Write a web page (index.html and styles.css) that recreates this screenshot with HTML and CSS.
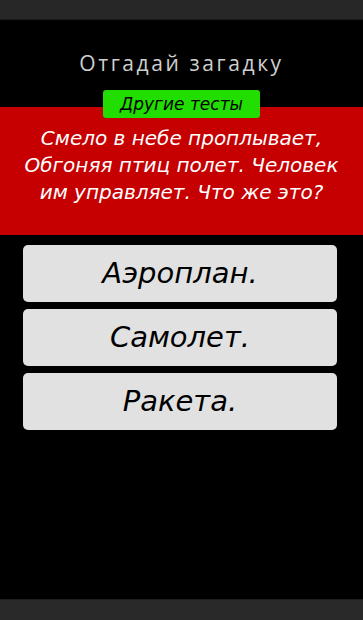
FILE: index.html
```html
<!DOCTYPE html>
<html>
<head>
<meta charset="utf-8">
<link rel="stylesheet" href="styles.css">
</head>
<body>
<div class="screen">
  <div class="statusbar"></div>
  <main class="content">
    <h1 class="title">Отгадай загадку</h1>
    <section class="riddle">
      <div class="other-tests">Другие тесты</div>
      <p class="question">Смело в небе проплывает,<br>Обгоняя птиц полет. Человек<br>им управляет. Что же это?</p>
    </section>
    <div class="answers">
      <div class="answer">Аэроплан.</div>
      <div class="answer">Самолет.</div>
      <div class="answer">Ракета.</div>
    </div>
  </main>
  <div class="navbar"></div>
</div>
</body>
</html>
```
FILE: styles.css
```css
html, body {
  margin: 0;
  padding: 0;
  background: #000;
}
.screen {
  width: 363px;
  height: 620px;
  display: flex;
  flex-direction: column;
  background: #000;
  overflow: hidden;
}
.statusbar {
  height: 19px;
  background: #272727;
  border-bottom: 1px solid #1a1a1a;
  flex: none;
}
.content {
  flex: 1;
  display: flex;
  flex-direction: column;
}
.title {
  margin: 31px 0 0;
  height: 24px;
  font-family: "Open Sans", "DejaVu Sans", sans-serif;
  font-weight: 400;
  font-size: 21px;
  line-height: 24px;
  letter-spacing: 2.6px;
  color: #cfcfcf;
  text-align: center;
}
.riddle {
  margin-top: 32px;
  background: #c60000;
  height: 128px;
  position: relative;
  display: flex;
  justify-content: center;
}
.other-tests {
  position: absolute;
  top: -17px;
  left: 103px;
  width: 157px;
  height: 28px;
  background: #22dd00;
  border-radius: 3px;
  font-family: "DejaVu Sans", sans-serif;
  font-style: italic;
  font-size: 17px;
  line-height: 29px;
  text-align: center;
  color: #000;
}
.question {
  margin: 18px 0 0;
  width: 340px;
  font-family: "DejaVu Sans", sans-serif;
  font-style: italic;
  font-size: 20px;
  line-height: 27px;
  color: #fff;
  text-align: center;
  white-space: nowrap;
}
.answers {
  margin: 10px 26px 0 23px;
  display: flex;
  flex-direction: column;
  gap: 7px;
}
.answer {
  height: 57px;
  background: #e1e1e1;
  border-radius: 5px;
  font-family: "DejaVu Sans", sans-serif;
  font-style: italic;
  font-size: 29px;
  line-height: 57px;
  text-align: center;
  color: #000;
}
.navbar {
  height: 20px;
  background: #292929;
  border-top: 1px solid #1e1e1e;
  flex: none;
}
```
